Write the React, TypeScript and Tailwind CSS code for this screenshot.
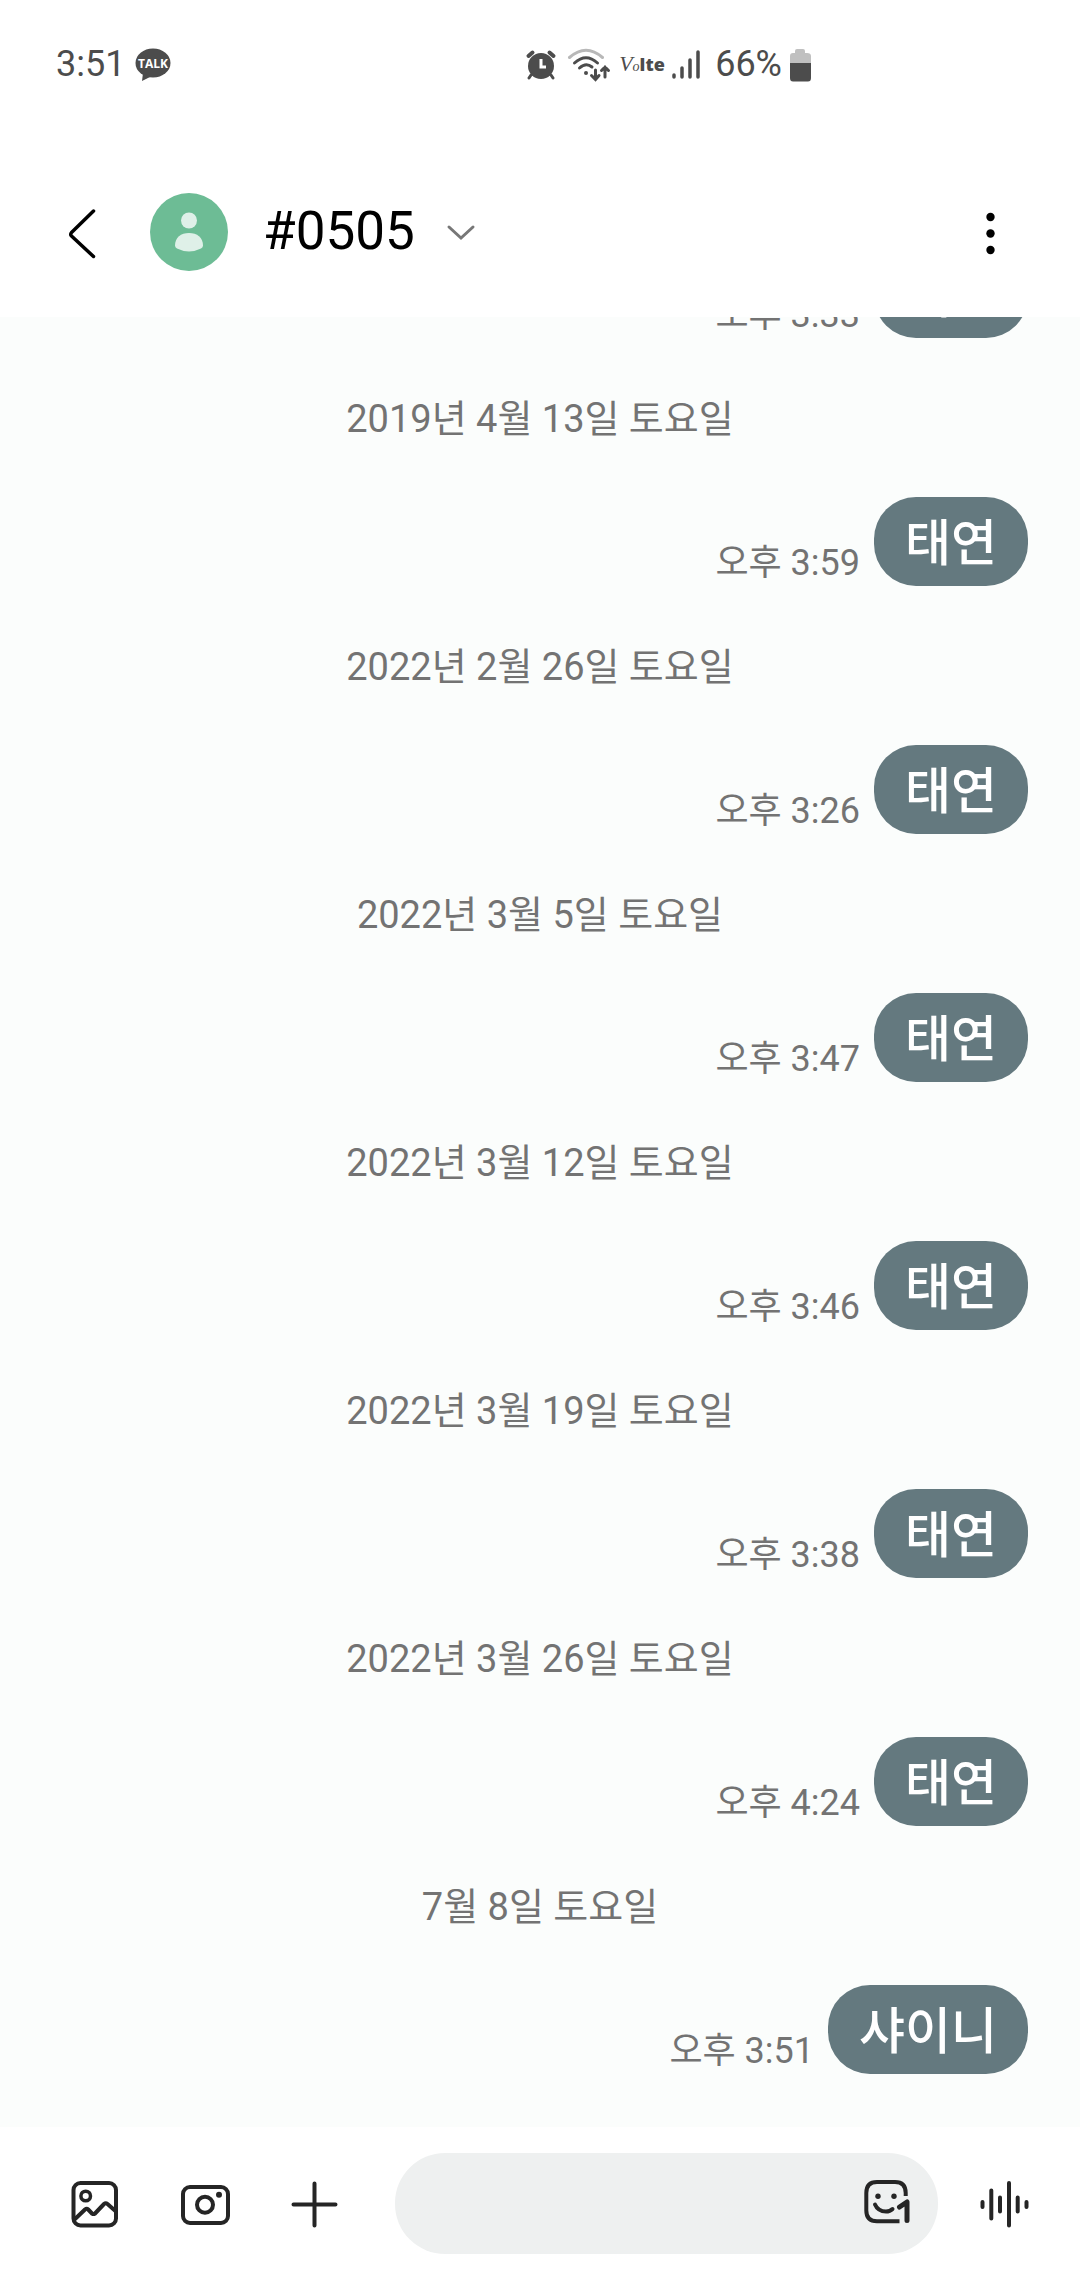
import { useState } from "react";
import type { ReactNode } from "react";

type Message = {
    id: number;
    date?: string;
    time: string;
    text: string;
};

const messages: Message[] = [
    { id: 1, time: "오후 3:33", text: "태연" },
    { id: 2, date: "2019년 4월 13일 토요일", time: "오후 3:59", text: "태연" },
    { id: 3, date: "2022년 2월 26일 토요일", time: "오후 3:26", text: "태연" },
    { id: 4, date: "2022년 3월 5일 토요일", time: "오후 3:47", text: "태연" },
    { id: 5, date: "2022년 3월 12일 토요일", time: "오후 3:46", text: "태연" },
    { id: 6, date: "2022년 3월 19일 토요일", time: "오후 3:38", text: "태연" },
    { id: 7, date: "2022년 3월 26일 토요일", time: "오후 4:24", text: "태연" },
    { id: 8, date: "7월 8일 토요일", time: "오후 3:51", text: "샤이니" },
];

function StatusBar() {
    return (
        <div className="flex h-32 shrink-0 items-center justify-between pl-14 pr-[268px] text-[36px] leading-none text-[#4c4c4c]">
            <div className="flex items-center gap-[10px]">
                <span>3:51</span>
                {/* Talk notification */}
                <svg className="h-9 w-9" viewBox="0 0 36 36">
                    <ellipse cx="18" cy="17" rx="17.5" ry="14.5" fill="#4c4c4c" />
                    <path d="M8 27L7 35L17 30Z" fill="#4c4c4c" />
                    <text
                        x="18"
                        y="22"
                        textAnchor="middle"
                        fontSize="12"
                        fontWeight="700"
                        fontFamily="'Open Sans', sans-serif"
                        fill="#fff"
                    >
                        TALK
                    </text>
                </svg>
            </div>

            <div className="flex items-center">
                {/* Alarm */}
                <svg className="h-8 w-8" viewBox="0 0 32 32" fill="none" stroke="#4c4c4c">
                    <circle cx="16" cy="18" r="13" fill="#4c4c4c" stroke="none" />
                    <path d="M3.5 8L7.5 4.5M28.5 8L24.5 4.5" strokeWidth="4" strokeLinecap="round" />
                    <path d="M6 27L4 30M26 27L28 30" strokeWidth="3" strokeLinecap="round" />
                    <path d="M16 11V19H21" stroke="#fff" strokeWidth="3" />
                </svg>

                {/* Wi-Fi */}
                <svg
                    className="ml-[10px] h-9 w-11"
                    viewBox="0 0 44 36"
                    fill="none"
                    stroke="#4c4c4c"
                    strokeWidth="3"
                    strokeLinecap="round"
                >
                    <path d="M2.5 11.5Q19 -3 35.5 11.5" stroke="#b8b8b8" />
                    <path d="M7.5 17Q19 6.5 30.5 17" />
                    <path d="M12.5 22Q19 16 25 21" />
                    <circle cx="19" cy="27" r="2" fill="#4c4c4c" stroke="none" />
                    <path d="M28.5 24V33M24.5 29.5L28.5 33.5L32 29.5" />
                    <path d="M38 31V21M34.5 24.5L38 21L41.5 24.5" />
                </svg>

                {/* VoLTE */}
                <span className="ml-2 flex w-[46px] items-baseline leading-none">
                    <span className="font-['Liberation_Serif'] text-[22px] italic">V</span>
                    <span className="font-['Liberation_Serif'] text-[14px] italic">o</span>
                    <span className="font-['Open_Sans'] text-[18px] font-extrabold">lte</span>
                </span>

                {/* Signal */}
                <svg
                    className="ml-[6px] h-8 w-[30px]"
                    viewBox="0 0 30 32"
                    stroke="#4c4c4c"
                    strokeWidth="3.5"
                    strokeLinecap="round"
                >
                    <path d="M3 27V29M11 20V29M19 12V29M27 4V29" />
                </svg>

                <span className="ml-[14px]">66%</span>

                {/* Battery */}
                <svg className="ml-[6px] h-9 w-6" viewBox="0 0 24 36">
                    <path d="M2 17V10Q2 7 5 7H7V5Q7 3 9 3H15Q17 3 17 5V7H19Q23 7 23 10V17Z" fill="#c0c0c0" />
                    <path d="M2 17H23V32Q23 35.5 20 35.5H5Q2 35.5 2 32Z" fill="#4c4c4c" />
                </svg>
            </div>
        </div>
    );
}

function Header() {
    return (
        <header className="flex h-[189px] shrink-0 items-center bg-white pl-[52px] pr-[60px] pt-[18px]">
            <button type="button" aria-label="뒤로" className="h-15 w-15">
                <svg
                    className="h-15 w-15"
                    viewBox="0 0 60 60"
                    fill="none"
                    stroke="#000"
                    strokeWidth="3.5"
                    strokeLinecap="round"
                    strokeLinejoin="round"
                >
                    <path d="M41.5 9L19.5 30.5Q18 32.5 19.5 34L41.5 54.5" />
                </svg>
            </button>

            {/* Avatar */}
            <svg className="ml-[38px] h-[78px] w-[78px]" viewBox="0 0 78 78">
                <circle cx="39" cy="39" r="39" fill="#6dbc95" />
                <circle cx="39" cy="27.5" r="8" fill="#dff0e8" />
                <path
                    d="M25 52.5C25 44.5 31 40 39 40S53 44.5 53 52.5Q53 54.5 51 55.5Q39 61.5 27 55.5Q25 54.5 25 52.5Z"
                    fill="#dff0e8"
                />
            </svg>

            <button type="button" className="ml-[35px] flex items-center gap-[30px]">
                <h1 className="text-[53px] leading-none text-black">#0505</h1>
                <svg
                    className="h-8 w-8"
                    viewBox="0 0 32 32"
                    fill="none"
                    stroke="#777"
                    strokeWidth="3"
                    strokeLinecap="round"
                >
                    <path d="M4 11L16 22L28 11" />
                </svg>
            </button>

            <button type="button" aria-label="더보기" className="ml-auto h-15 w-15">
                <svg className="h-15 w-15" viewBox="0 0 60 60">
                    <circle cx="30.5" cy="15" r="4.2" />
                    <circle cx="30.5" cy="31.5" r="4.2" />
                    <circle cx="30.5" cy="48" r="4.2" />
                </svg>
            </button>
        </header>
    );
}

function MessageRow({ message }: { message: Message }) {
    return (
        <li>
            {message.date && (
                <p className="flex h-[159px] items-center justify-center pt-[2px] text-[38px] leading-none text-[#737373]">
                    {message.date}
                </p>
            )}
            <div className="flex items-end justify-end gap-[14px]">
                <time className="text-[36px] leading-[46px] text-[#737373]">{message.time}</time>
                <p className="flex h-[89px] items-center rounded-[42px] bg-[#64797f] px-[31px] pt-1 text-[50px] font-medium leading-none text-white">
                    {message.text}
                </p>
            </div>
        </li>
    );
}

function IconButton({ label, children }: { label: string; children: ReactNode }) {
    return (
        <button type="button" aria-label={label} className="h-15 w-15 shrink-0">
            <svg
                className="h-15 w-15"
                viewBox="0 0 60 60"
                fill="none"
                stroke="#252525"
                strokeWidth="4"
                strokeLinecap="round"
                strokeLinejoin="round"
            >
                {children}
            </svg>
        </button>
    );
}

function Composer() {
    const [text, setText] = useState("");

    return (
        <footer className="flex h-[153px] shrink-0 items-center bg-white pl-[65px] pr-[45px]">
            <div className="flex gap-[50px]">
                <IconButton label="갤러리">
                    <rect x="8.5" y="9" width="42.5" height="42.5" rx="7" />
                    <circle cx="20.7" cy="22" r="4.8" strokeWidth="3.5" />
                    <path d="M9.5 45.5L20 35.5Q21.7 34 23.2 35.5L27 39.5Q28.5 40.5 30 39.5L39 30Q40.7 28.5 42.5 30L51 37.5" />
                </IconButton>
                <IconButton label="카메라">
                    <rect x="8" y="13" width="45" height="36" rx="7" />
                    <circle cx="30" cy="30.7" r="8" />
                    <circle cx="44" cy="20.7" r="3" fill="#252525" stroke="none" />
                </IconButton>
                <IconButton label="추가">
                    <path d="M29.5 9.5V51.5M8.5 30.5H50.5" />
                </IconButton>
            </div>

            <div className="ml-[50px] mr-[37px] flex h-[101px] min-w-0 flex-1 items-center rounded-[50px] bg-[#eef0f0] pl-10 pr-[21px]">
                <input
                    type="text"
                    aria-label="메시지 입력"
                    value={text}
                    onChange={(e) => setText(e.target.value)}
                    className="h-full min-w-0 flex-1 bg-transparent text-[38px] text-black outline-none"
                />
                <IconButton label="스티커">
                    <path
                        d="M48.7 22V19Q48.7 8 38 8H20Q9.3 8 9.3 19V36.5Q9.3 47.3 20 47.3H42.5"
                        strokeLinecap="butt"
                    />
                    <circle cx="21" cy="22.3" r="2.7" fill="#252525" stroke="none" />
                    <circle cx="37" cy="22.3" r="2.7" fill="#252525" stroke="none" />
                    <path d="M18 30.5Q21 37.5 29 37.5Q33 37.5 35.5 35" />
                    <path d="M42.5 33L50 28V46.5" strokeWidth="5" />
                </IconButton>
            </div>

            <IconButton label="음성 녹음">
                <path d="M7.5 28V33M16.3 16.5V44.5M25 23.5V37.5M34 9V51.5M42.7 23.5V37.5M51.5 28V33" />
            </IconButton>
        </footer>
    );
}

export default function App() {
    return (
        <div className="flex h-screen flex-col bg-white font-[Roboto,'Noto_Sans_CJK_KR',sans-serif]">
            <StatusBar />
            <Header />
            <main className="flex min-h-0 flex-1 flex-col justify-end overflow-hidden bg-[#fbfdfc] px-[52px] pb-[53px]">
                <ul>
                    {messages.map((message) => (
                        <MessageRow key={message.id} message={message} />
                    ))}
                </ul>
            </main>
            <Composer />
        </div>
    );
}
